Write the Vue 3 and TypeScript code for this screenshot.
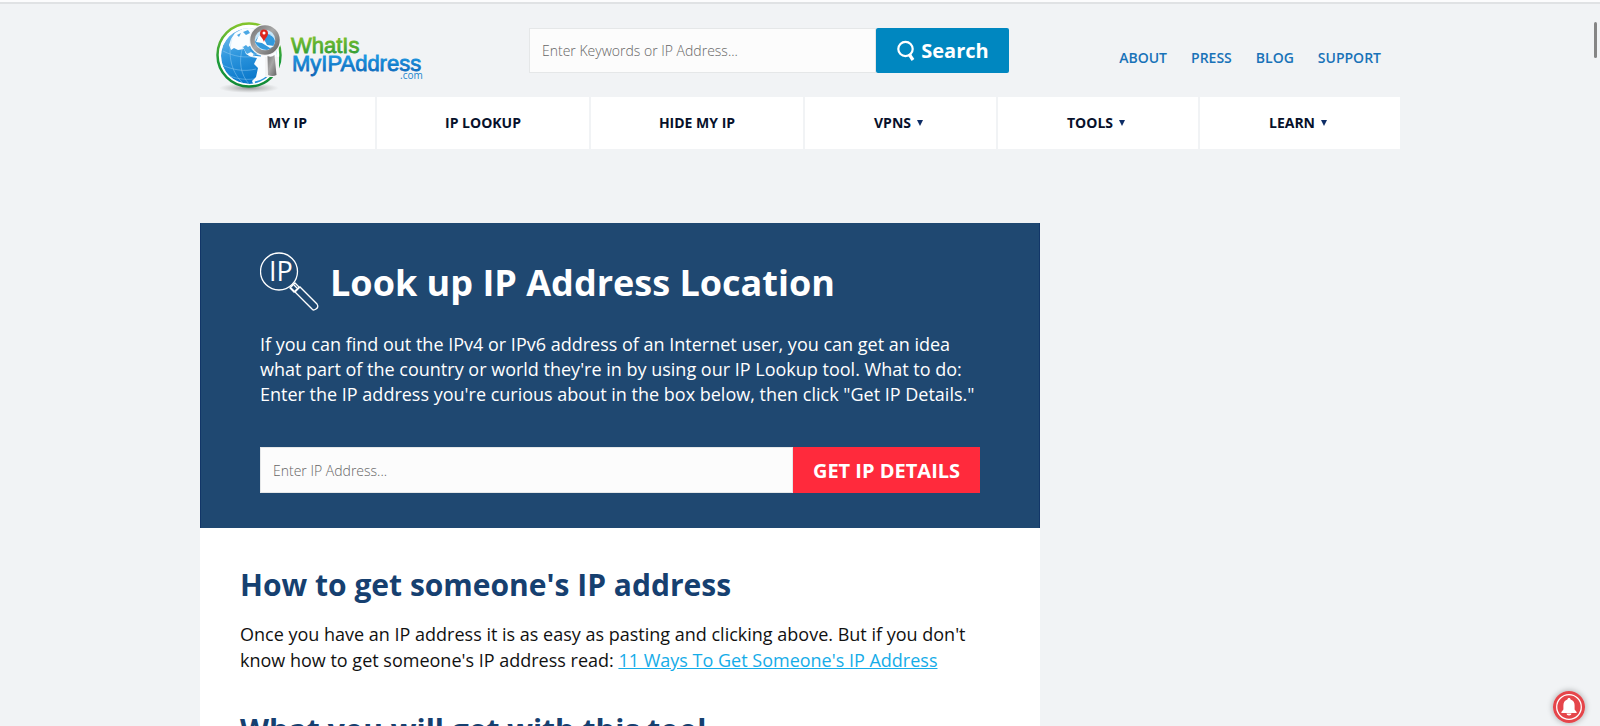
<script setup lang="ts">
import { ref } from 'vue'

interface MenuItem {
  label: string
  menu?: boolean
}

const topLinks: string[] = ['ABOUT', 'PRESS', 'BLOG', 'SUPPORT']
const menu: MenuItem[] = [
  { label: 'MY IP' },
  { label: 'IP LOOKUP' },
  { label: 'HIDE MY IP' },
  { label: 'VPNS', menu: true },
  { label: 'TOOLS', menu: true },
  { label: 'LEARN', menu: true },
]
const keywords = ref('')
const address = ref('')
</script>

<template>
  <div class="page">
    <div class="container">
      <header class="header">
        <a href="#" class="logo" aria-label="WhatIsMyIPAddress.com">
          <svg width="210" height="72" viewBox="0 0 210 72">
            <defs>
              <linearGradient id="ring" x1="0" y1="0" x2="0" y2="1">
                <stop offset="0" stop-color="#83c52c" />
                <stop offset="0.6" stop-color="#1d9b3b" />
                <stop offset="1" stop-color="#0f8a36" />
              </linearGradient>
              <linearGradient id="sea" x1="0" y1="0" x2="0.3" y2="1">
                <stop offset="0" stop-color="#7fc2ee" />
                <stop offset="0.5" stop-color="#2f97de" />
                <stop offset="1" stop-color="#0a78cb" />
              </linearGradient>
              <linearGradient id="metal" x1="0" y1="0" x2="1" y2="1">
                <stop offset="0" stop-color="#777" />
                <stop offset="0.45" stop-color="#a8a8a8" />
                <stop offset="1" stop-color="#666" />
              </linearGradient>
              <linearGradient id="green" x1="0" y1="0" x2="0" y2="1">
                <stop offset="0.2" stop-color="#76bd2b" />
                <stop offset="1" stop-color="#219638" />
              </linearGradient>
              <linearGradient id="blue" x1="0" y1="0" x2="0" y2="1">
                <stop offset="0.2" stop-color="#1a96e0" />
                <stop offset="1" stop-color="#0b62b5" />
              </linearGradient>
              <radialGradient id="shade">
                <stop offset="0" stop-color="#777" stop-opacity="0.75" />
                <stop offset="1" stop-color="#999" stop-opacity="0" />
              </radialGradient>
              <clipPath id="globe"><circle cx="33" cy="34" r="28" /></clipPath>
            </defs>
            <ellipse cx="33" cy="66" rx="30" ry="5" fill="url(#shade)" />
            <circle cx="33" cy="33" r="31.500" fill="#fff" stroke="url(#ring)" stroke-width="2.500" />
            <g clip-path="url(#globe)">
              <circle cx="33" cy="34" r="28" fill="url(#sea)" />
              <path d="M15 17l4-6 9-5h34v52l-8 5-16 1-2-5 4-4 2-9-4-4 3-6-6-1-5-3-2-5-6 1-4-2-3 2-2-5z" fill="#fafdff" />
              <path d="M27 10l5-2 2 3-4 2zM21 13l4-2-2 4zM27 25l3-2 2 2 3-2 2 3 4 1 3 5-5 1-4-3-4 2-2-3z" fill="#4aa7e4" />
              <path d="M34 27l3 3 3-1M37 33l8 1" fill="none" stroke="#2c92da" stroke-width="1.200" />
              <path d="M4 42c12 6 24 8 36 5M7 29c12 6 22 7 32 5M16 16c-5 18 0 36 12 46M27 24c-5 16-2 29 6 38M8 51c10 6 20 7 30 6" fill="none" stroke="#a9d9f7" stroke-width="0.600" opacity="0.700" />
              <path d="M39 61q11-2 17-11" fill="none" stroke="#2b94dc" stroke-width="3" />
            </g>
            <circle cx="49" cy="18" r="16" fill="#f3f4f5" />
            <circle cx="49" cy="18" r="12.500" fill="#c7e7fa" stroke="url(#metal)" stroke-width="4.500" />
            <path d="M39 20q3-7 9-9 10 2 11 8-1 7-8 9-9-1-12-8z" fill="#3199dd" />
            <path d="M43 13l5 4 3 6 7 1-4 2-8-5-6-1z" fill="#fff" />
            <path d="M48 20c-1-4-4-5-4-8.500a4 4 0 0 1 8 0c0 3-3 4.500-4 8.500z" fill="#dc281e" />
            <circle cx="48" cy="11" r="1.500" fill="#fff" />
            <path d="M49 35h14v20h-14z" fill="#f3f4f5" />
            <path d="M51.500 34q4 2 7-1l2 20q-4 2-8.500 0z" fill="url(#metal)" />
            <text x="75" y="31" class="word" fill="url(#green)" stroke="url(#green)">WhatIs</text>
            <text x="76" y="49" class="word" fill="url(#blue)" stroke="url(#blue)">MyIPAddress</text>
            <text x="184" y="57" class="dotcom">.com</text>
          </svg>
        </a>

        <form class="search" @submit.prevent>
          <input v-model="keywords" type="text" aria-label="Keywords or IP address" placeholder="Enter Keywords or IP Address..." />
          <button type="submit">
            <svg width="20" height="22" viewBox="0 0 20 22" aria-hidden="true">
              <circle cx="9.500" cy="9" r="7.200" fill="none" stroke="#fff" stroke-width="2.200" />
              <path d="M13 14l4 6" stroke="#fff" stroke-width="3.200" />
            </svg>
            Search
          </button>
        </form>

        <nav class="top-links" aria-label="Site">
          <a v-for="link in topLinks" :key="link" href="#">{{ link }}</a>
        </nav>
      </header>

      <nav class="menu" aria-label="Main">
        <a v-for="item in menu" :key="item.label" href="#" :class="{ 'has-menu': item.menu }">
          {{ item.label }}
          <svg v-if="item.menu" width="6" height="6" viewBox="0 0 6 6" aria-hidden="true">
            <path d="M0 0h6l-3 6z" fill="#0e2d66" />
          </svg>
        </a>
      </nav>

      <main class="main">
        <section class="hero">
          <div class="hero-title">
            <svg width="60" height="60" viewBox="0 0 60 60" aria-hidden="true">
              <g fill="none" stroke="#fff" stroke-width="1.300">
                <circle cx="19" cy="19.500" r="18.500" />
                <path d="M30 36l5-5 4 4-5 5z" />
                <path d="M34 33l3 3M31 36l4 4" />
                <path d="M35 40l5-5 17 17q2 3-1 5t-4 0z" />
              </g>
              <text x="9" y="29" class="ip">IP</text>
            </svg>
            <h1>Look up IP Address Location</h1>
          </div>
          <p>If you can find out the IPv4 or IPv6 address of an Internet user, you can get an idea what part of the country or world they're in by using our IP Lookup tool. What to do: Enter the IP address you're curious about in the box below, then click "Get IP Details."</p>
          <form class="lookup" @submit.prevent>
            <input v-model="address" type="text" aria-label="IP address" placeholder="Enter IP Address..." />
            <button type="submit">GET IP DETAILS</button>
          </form>
        </section>
        <section class="article">
          <h2>How to get someone's IP address</h2>
          <p>Once you have an IP address it is as easy as pasting and clicking above. But if you don't know how to get someone's IP address read: <a href="#">11 Ways To Get Someone's IP Address</a></p>
          <h2>What you will get with this tool</h2>
        </section>
      </main>
    </div>

    <div class="scroll-thumb"></div>
    <button class="bell" type="button" aria-label="Notifications">
      <svg width="32" height="32" viewBox="0 0 32 32">
        <circle cx="16" cy="16" r="16" fill="#e5454a" />
        <circle cx="16" cy="16" r="12.300" fill="none" stroke="#fff" stroke-width="1.300" />
        <path d="M16 7c1 0 1.500.6 1.600 1.500 3 .8 4 3.200 4 6v4l2 2.500v1H8.400v-1l2-2.500v-4c0-2.800 1-5.200 4-6C14.500 7.600 15 7 16 7z" fill="#fff" />
        <path d="M13.500 22.500h5a2.500 2 0 0 1-5 0z" fill="#fff" />
      </svg>
    </button>
  </div>
</template>

<style>
html {
  overflow: hidden;
}
body {
  margin: 0;
  background: #f1f3f5;
}
</style>

<style scoped>
* {
  box-sizing: border-box;
}
.page {
  min-height: 100vh;
  border-top: 2px solid #fcfcfd;
  background: #f1f3f5;
  box-shadow: inset 0 2px #e0e2e4;
  font-family: 'Open Sans', 'Noto Sans', sans-serif;
  color: #111;
}
.container {
  max-width: 1200px;
  margin: 0 auto;
}
.header {
  display: flex;
  align-items: flex-start;
  height: 95px;
  padding: 20px 19px 0 16px;
}
.logo {
  flex: none;
  width: 313px;
}
.logo svg {
  display: block;
}
.word {
  font: 22px 'Liberation Sans', Arial, sans-serif;
  stroke-width: 0.8px;
}
.dotcom {
  font: 10px 'Open Sans', sans-serif;
  fill: #1b84cd;
}
.search {
  display: flex;
  flex: 0 1 480px;
  height: 45px;
  margin-top: 6px;
}
input {
  flex: 1;
  min-width: 0;
  padding: 0 12px;
  border: 1px solid #e5e7e8;
  border-radius: 0;
  outline: 0;
  background: #fcfcfc;
  font: 300 14px 'Open Sans', sans-serif;
}
input::placeholder {
  color: #666;
  opacity: 1;
}
button {
  border: 0;
  cursor: pointer;
  font-family: inherit;
}
.search button {
  display: flex;
  align-items: center;
  justify-content: center;
  gap: 5px;
  width: 133px;
  border-radius: 2px;
  background: #0087c0;
  color: #fff;
  font-size: 20px;
  font-weight: 700;
}
.top-links {
  display: flex;
  gap: 24px;
  margin-left: auto;
  padding-top: 26px;
}
.top-links a {
  color: #1872b8;
  font-size: 14px;
  font-weight: 600;
  line-height: 20px;
  text-decoration: none;
}
.menu {
  display: grid;
  grid-template-columns: 175fr 212fr 212fr 191fr 200fr 200fr;
  gap: 2px;
}
.menu a {
  display: flex;
  align-items: center;
  justify-content: center;
  gap: 6px;
  height: 52px;
  padding-bottom: 1px;
  background: #fff;
  color: #07112b;
  font-size: 14px;
  font-weight: 700;
  text-decoration: none;
}
.menu .has-menu {
  padding-right: 4px;
}
.main {
  width: 70%;
  margin-top: 74px;
  background: #fff;
}
.hero {
  padding: 29px 59px 35px;
  border: 1px solid #123668;
  border-width: 0 1px;
  background: #1f4871;
  color: #fff;
}
.hero-title {
  display: flex;
  gap: 10px;
}
.hero-title svg {
  flex: none;
}
.ip {
  font: 27px 'Open Sans', sans-serif;
  fill: #fff;
}
h1 {
  margin: 6px 0 0;
  font-size: 36px;
  line-height: 50px;
}
p {
  margin: 0;
  font-size: 18px;
  line-height: 26px;
}
.hero p {
  margin: 20px 0 40px;
  line-height: 25px;
}
.lookup {
  display: flex;
  height: 46px;
}
.lookup button {
  width: 187px;
  background: #ff2a3c;
  color: #fff;
  font-size: 20px;
  font-weight: 700;
}
.article {
  padding: 37px 40px 0;
}
h2 {
  margin: 0;
  color: #164070;
  font-size: 30px;
  line-height: 40px;
}
.article p {
  margin: 16px 0 37px;
}
.article a {
  color: #16ace8;
}
.scroll-thumb {
  position: fixed;
  top: 22px;
  right: 3px;
  width: 3px;
  height: 36px;
  border-radius: 2px;
  background: #858585;
}
.bell {
  position: fixed;
  right: 15px;
  bottom: 3px;
  display: flex;
  padding: 0;
  border-radius: 50%;
  background: none;
  box-shadow: 0 0 6px #0005;
}
</style>
